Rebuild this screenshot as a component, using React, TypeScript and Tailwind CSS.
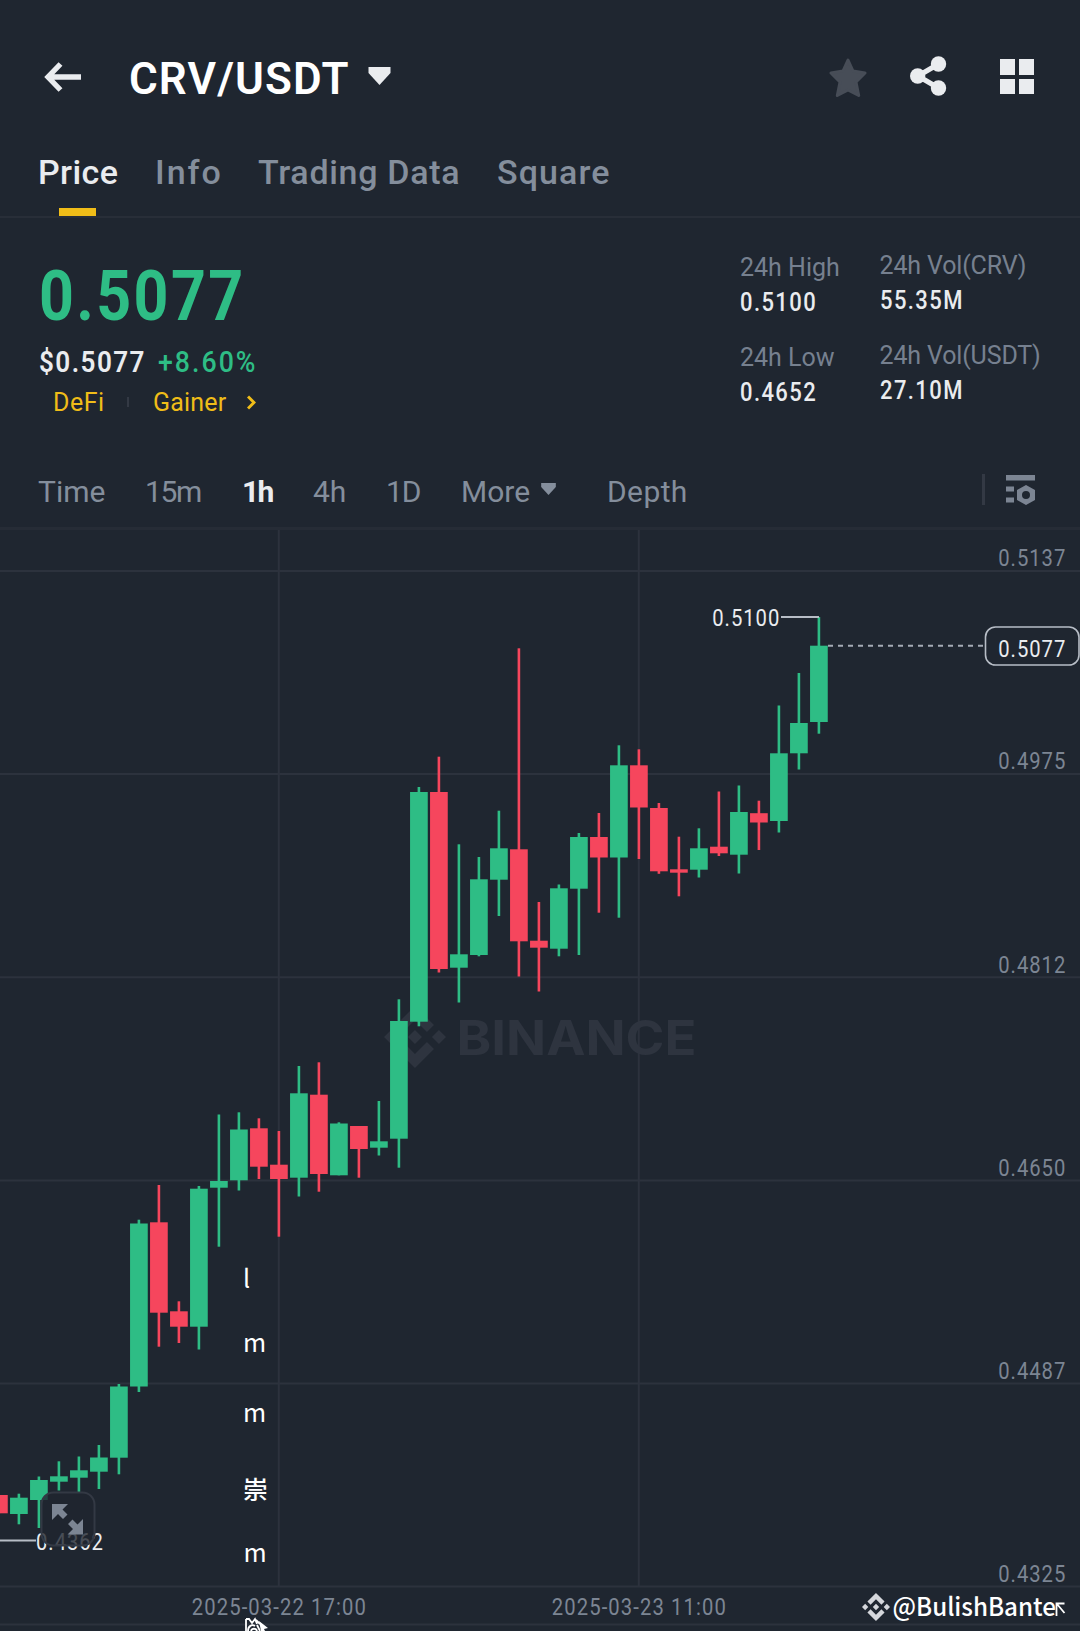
import type { ReactNode } from 'react';
import { SiBinance } from 'react-icons/si';

const UP = '#2ebd85';
const DOWN = '#f6465d';

// pixel rows of the chart: [high, body top, body bottom, low, rising]
type Candle = [number, number, number, number, boolean];

const FIRST_X = -1.1;
const STEP = 20;
const BODY = 17.7;

const CANDLES: Candle[] = [
  [1495, 1495, 1513.3, 1513.3, false],
  [1493.7, 1497.7, 1514, 1524.3, true],
  [1476.5, 1480, 1500, 1528, true],
  [1461.3, 1476.3, 1481.7, 1490.5, true],
  [1456.5, 1470.3, 1477.7, 1492, true],
  [1445, 1457.5, 1471.7, 1489, true],
  [1384, 1386.5, 1457.7, 1474.3, true],
  [1219.7, 1223.5, 1386.5, 1392, true],
  [1185, 1222.3, 1312.7, 1346.7, false],
  [1301.3, 1311.3, 1326.7, 1343, false],
  [1186, 1188.7, 1326.7, 1349.5, true],
  [1114.5, 1181, 1187.7, 1246.7, true],
  [1112.3, 1129.5, 1180.3, 1190.5, true],
  [1118.3, 1128.3, 1166.7, 1179, false],
  [1131, 1164.7, 1179, 1236.7, false],
  [1066, 1093.3, 1177.7, 1196.5, true],
  [1062.3, 1094.7, 1174, 1191.7, false],
  [1122.3, 1123.5, 1175.3, 1175.3, true],
  [1126, 1126, 1149, 1177.7, false],
  [1101, 1141.3, 1147.7, 1155.5, true],
  [999.3, 1021, 1138.7, 1167.7, true],
  [787, 792, 1021.7, 1026.3, true],
  [756.7, 792, 969, 972.5, false],
  [844.3, 954.3, 967.7, 1002.5, true],
  [857, 879.3, 955, 956.3, true],
  [810.7, 848.3, 879.7, 916, true],
  [648.3, 849.3, 941.3, 976.5, false],
  [902, 940.7, 947.7, 991.5, false],
  [884.5, 888.3, 948.7, 956.3, true],
  [833, 837, 888.7, 955, true],
  [813, 837, 857.5, 912.7, false],
  [745.3, 765.3, 857.5, 917.7, true],
  [749.3, 765.3, 807.5, 859, false],
  [803, 808, 871.3, 873.8, false],
  [836.7, 869.3, 872.7, 896.3, false],
  [828.3, 848.3, 869.7, 877.5, true],
  [791.5, 846.7, 853.3, 856, false],
  [785.5, 812, 854.7, 873.5, true],
  [800.7, 813.2, 822.5, 850, false],
  [705.5, 753.3, 821, 832.5, true],
  [673, 723, 753.3, 769.5, true],
  [617, 645.7, 722, 733.7, true],
];

const PRICE_LINES = [
  { y: 571, label: '0.5137' },
  { y: 774, label: '0.4975' },
  { y: 977.3, label: '0.4812' },
  { y: 1180.5, label: '0.4650' },
  { y: 1383.5, label: '0.4487' },
  { y: 1586.5, label: '0.4325' },
];

const TIME_LINES = [
  { x: 278.8, label: '2025-03-22 17:00' },
  { x: 638.8, label: '2025-03-23 11:00' },
];

function Caret({ className }: { className: string }) {
  return (
    <svg viewBox="0 0 22 18" className={className} fill="currentColor">
      <path d="M0 0h22v6L11 18 0 6z" />
    </svg>
  );
}

function Header() {
  return (
    <header className="flex items-center h-[150px] pl-[44px] pr-[46px] pt-[4px] text-[#eaecef]">
      <svg className="w-[37px] h-[30px] shrink-0" viewBox="0 0 37 30" fill="none" stroke="currentColor" strokeWidth="5.4">
        <path d="M37 15H5M16.5 2L4 15l12.5 13" />
      </svg>
      <h1 className="ml-[48px] pt-[4px] text-[44px] font-semibold tracking-[1.100px] text-white">CRV/USDT</h1>
      <Caret className="ml-[18px] -mt-[2px] w-[23px] h-[18px]" />
      <div className="flex items-center ml-auto">
        <svg className="w-[38px] h-[40px] mt-[1px] text-[#474d57]" viewBox="0 0 38 40" fill="currentColor" stroke="currentColor" strokeWidth="3" strokeLinejoin="round">
          <path d="M19 2l5 11 12 2-9 9 2.700 13.500L19 32l-10.700 5.500L11 24 2 15l12-2z" />
        </svg>
        <svg className="ml-[43px] -mt-[2px] w-[37px] h-[40px]" viewBox="0 0 37 40" fill="currentColor">
          <path d="M8 20L28.500 8M8 20l20.500 12" stroke="currentColor" strokeWidth="5" />
          <circle cx="7.700" cy="20" r="7.700" />
          <circle cx="28.500" cy="8" r="7.700" />
          <circle cx="28.500" cy="32" r="7.700" />
        </svg>
        <div className="grid grid-cols-2 gap-[4px] ml-[53px] -mt-[1px] w-[34px]">
          <span className="h-[15.500px] bg-current" />
          <span className="h-[15.500px] bg-current" />
          <span className="h-[15.500px] bg-current" />
          <span className="h-[15.500px] bg-current" />
        </div>
      </div>
    </header>
  );
}

function Tabs() {
  return (
    <nav className="flex h-[68px] pl-[38px] border-b-2 border-[#282e38] text-[34px] leading-[44px] font-medium tracking-[0.7px] text-[#848e9c]">
      <div className="flex flex-col justify-between w-[80px] text-[#eaecef]">
        <span className="tracking-[0.4px]">Price</span>
        <span className="ml-[21px] w-[37px] h-[8px] bg-[#f0bd18]" />
      </div>
      <span className="ml-[37px] w-[67px] tracking-[2px]">Info</span>
      <span className="ml-[36px] w-[203px] whitespace-nowrap">Trading Data</span>
      <span className="ml-[36px] tracking-[1.100px]">Square</span>
    </nav>
  );
}

function Stat({ label, value }: { label: string; value: string }) {
  return (
    <div className="h-[90px] whitespace-nowrap">
      <div className="text-[25px] leading-[32px] text-[#76808f]">{label}</div>
      <div className="origin-left scale-x-[0.88] tracking-[1.600px] text-[25px] leading-[38px] font-medium text-[#eaecef]">{value}</div>
    </div>
  );
}

function Summary() {
  return (
    <section className="flex h-[240px] pl-[39px]">
      <div className="w-[701px] pt-[36px]">
        <div className="origin-left scale-x-[0.87] text-[70px] leading-[84px] font-bold tracking-[2.700px] text-[#2ebd85]">0.5077</div>
        <div className="flex mt-[4px] text-[29px] leading-[40px] font-semibold">
          <span className="w-[119px] origin-left scale-x-[0.9] tracking-[1.600px] text-[#eaecef]">$0.5077</span>
          <span className="origin-left scale-x-[0.92] font-medium tracking-[2.200px] text-[#2ebd85]">+8.60%</span>
        </div>
        <div className="flex items-center mt-[3px] pl-[14px] text-[25px] leading-[36px] text-[#f0bd18]">
          <span className="w-[74px] tracking-[0.5px]">DeFi</span>
          <span className="w-[2px] h-[10px] -mt-[2px] bg-[#333944]" />
          <span className="ml-[24px] w-[94px] tracking-[0.2px]">Gainer</span>
          <svg className="w-[9px] h-[15px] -mt-[2px]" viewBox="0 0 9 15" fill="none" stroke="currentColor" strokeWidth="3">
            <path d="M1 1.500l6 6-6 6" />
          </svg>
        </div>
      </div>
      <div className="w-[139.500px] pt-[34px]">
        <Stat label="24h High" value="0.5100" />
        <Stat label="24h Low" value="0.4652" />
      </div>
      <div className="pt-[32px] tracking-[-0.15px]">
        <Stat label="24h Vol(CRV)" value="55.35M" />
        <Stat label="24h Vol(USDT)" value="27.10M" />
      </div>
    </section>
  );
}

function Intervals() {
  return (
    <div className="flex items-center h-[72px] pl-[38px] pr-[45px] pb-[3px] border-b-[3px] border-[#262c36] text-[30px] text-[#848e9c]">
      <span className="w-[107px]">Time</span>
      <span className="w-[97px] tracking-[-1.300px]">15m</span>
      <span className="w-[71px] font-bold tracking-[-1.800px] text-[#eaecef]">1h</span>
      <span className="w-[73px]">4h</span>
      <span className="w-[75px] tracking-[-1px]">1D</span>
      <span className="w-[79px]">More</span>
      <Caret className="w-[17px] h-[12px] -mt-[5px]" />
      <span className="ml-[50px] tracking-[0.4px]">Depth</span>
      <span className="ml-auto -mt-[3px] w-[3px] h-[31px] bg-[#333944]" />
      <svg className="ml-[21px] -mt-[3px] w-[29px] h-[30px] text-[#7c8593]" viewBox="0 0 29 30" fill="currentColor">
        <path d="M0 0h29v5.500H0zM0 11.500h8v5H0zM0 22.500h8v5H0z" />
        <path fillRule="evenodd" d="M20 10l9 5v10l-9 5-9-5V15zM20 16a4 4 0 1 0 0 8 4 4 0 0 0 0-8z" />
      </svg>
    </div>
  );
}

interface LabelProps {
  x: number;
  y: number;
  width: number;
  children: ReactNode;
  fill?: string;
}

// digits are squeezed a little, then spaced out to the given width
function ChartLabel({ x, y, width, children, fill = '#7c8593' }: LabelProps) {
  return (
    <text transform={`translate(${x} ${y}) scale(0.88 1)`} textLength={width / 0.88} fontSize="23" fill={fill}>
      {children}
    </text>
  );
}

function Chart() {
  return (
    <svg width="1080" height="1101" viewBox="0 530 1080 1101" className="block">
      {/* Grid */}
      <g stroke="#2c323d" strokeWidth="2">
        {PRICE_LINES.map(line => (
          <line key={line.label} x1="0" x2="1080" y1={line.y} y2={line.y} />
        ))}
        {TIME_LINES.map(line => (
          <line key={line.label} x1={line.x} x2={line.x} y1="529" y2="1587" />
        ))}
        <line x1="0" x2="1080" y1="1624.500" y2="1624.500" />
      </g>

      {/* Watermark */}
      <g fill="#2e343f" color="#2e343f">
        <SiBinance x="384" y="1006" size={62} />
        <text x="456.500" y="1055" textLength="240" lengthAdjust="spacingAndGlyphs" fontSize="48" fontWeight="700" fontFamily="Inter, sans-serif">BINANCE</text>
      </g>

      {/* Candles */}
      {CANDLES.map(([high, top, bottom, low, up], i) => {
        const x = FIRST_X + i * STEP;
        return (
          <g key={i} fill={up ? UP : DOWN}>
            <rect x={x - 1.3} y={high} width={2.6} height={low - high} />
            <rect x={x - BODY / 2} y={top} width={BODY} height={bottom - top} />
          </g>
        );
      })}

      {/* Price scale */}
      {PRICE_LINES.map(line => (
        <ChartLabel key={line.label} x={998.3} y={line.y - 4.7} width={67}>{line.label}</ChartLabel>
      ))}

      {/* Time scale */}
      {TIME_LINES.map(line => (
        <ChartLabel key={line.label} x={line.x - 87} y={1615} width={174}>{line.label}</ChartLabel>
      ))}

      {/* High and low marks */}
      <path d="M781 617h38M0 1540.500h36" stroke="#b7bdc6" strokeWidth="2" />
      <ChartLabel x={712.3} y={626} width={67} fill="#eaecef">0.5100</ChartLabel>
      <ChartLabel x={36} y={1550} width={67} fill="#eaecef">0.4362</ChartLabel>

      {/* Last price */}
      <path d="M828 645.700h156" stroke="#a5abb5" strokeWidth="2" strokeDasharray="5 5" />
      <rect x="985.500" y="627" width="93.500" height="38" rx="10" fill="#1f2630" stroke="#b7bdc6" strokeWidth="1.600" />
      <ChartLabel x={998.3} y={657} width={67} fill="#eaecef">0.5077</ChartLabel>

      {/* Fullscreen button */}
      <rect x="41.500" y="1492.500" width="53" height="53" rx="12" fill="#1f2630" fillOpacity="0.8" stroke="#333944" strokeWidth="2" />
      <path
        fill="#7c8593"
        d="M52 1504h16l-5.500 5.500 5 5-4.500 4.500-5-5-6 6zM83 1534.500H67.500l5.500-5.500-5-5 4.500-4.500 5 5 5.500-5.500z"
      />

      {/* Overlay captions */}
      <g fill="#ffffff" fontSize="25" fontFamily="'Noto Sans CJK SC', sans-serif">
        <text x="243" y="1288">l</text>
        <text x="243" y="1352">m</text>
        <text x="243" y="1422">m</text>
        <text x="243" y="1499" fontWeight="500">崇</text>
        <text x="243.500" y="1562">m</text>
        <path
          fill="none"
          stroke="#ffffff"
          strokeWidth="1.800"
          d="M246 1619v12M246 1619h3l3 4 3-4 2 5M248 1631c0-5 4-7 7-5M251 1631c1-3 5-3 6 0M256 1620l4 4M257 1625l3 6"
        />
        <path d="M259 1621l9 7-4 1 1 2h-4z" />
        <SiBinance x="862" y="1593" size={28} color="#d5d7dc" />
        <text x="892.500" y="1616" textLength="163.500" lengthAdjust="spacingAndGlyphs" fontWeight="500">@BulishBante</text>
        <path fill="none" stroke="#ffffff" strokeWidth="1.800" d="M1056.500 1616v-12.500h8M1057 1604l7.500 9" />
      </g>
    </svg>
  );
}

export default function App() {
  return (
    <div className="w-[1080px] h-[1631px] overflow-hidden bg-[#1f2630] font-['Roboto',sans-serif]">
      <Header />
      <Tabs />
      <Summary />
      <Intervals />
      <Chart />
    </div>
  );
}
